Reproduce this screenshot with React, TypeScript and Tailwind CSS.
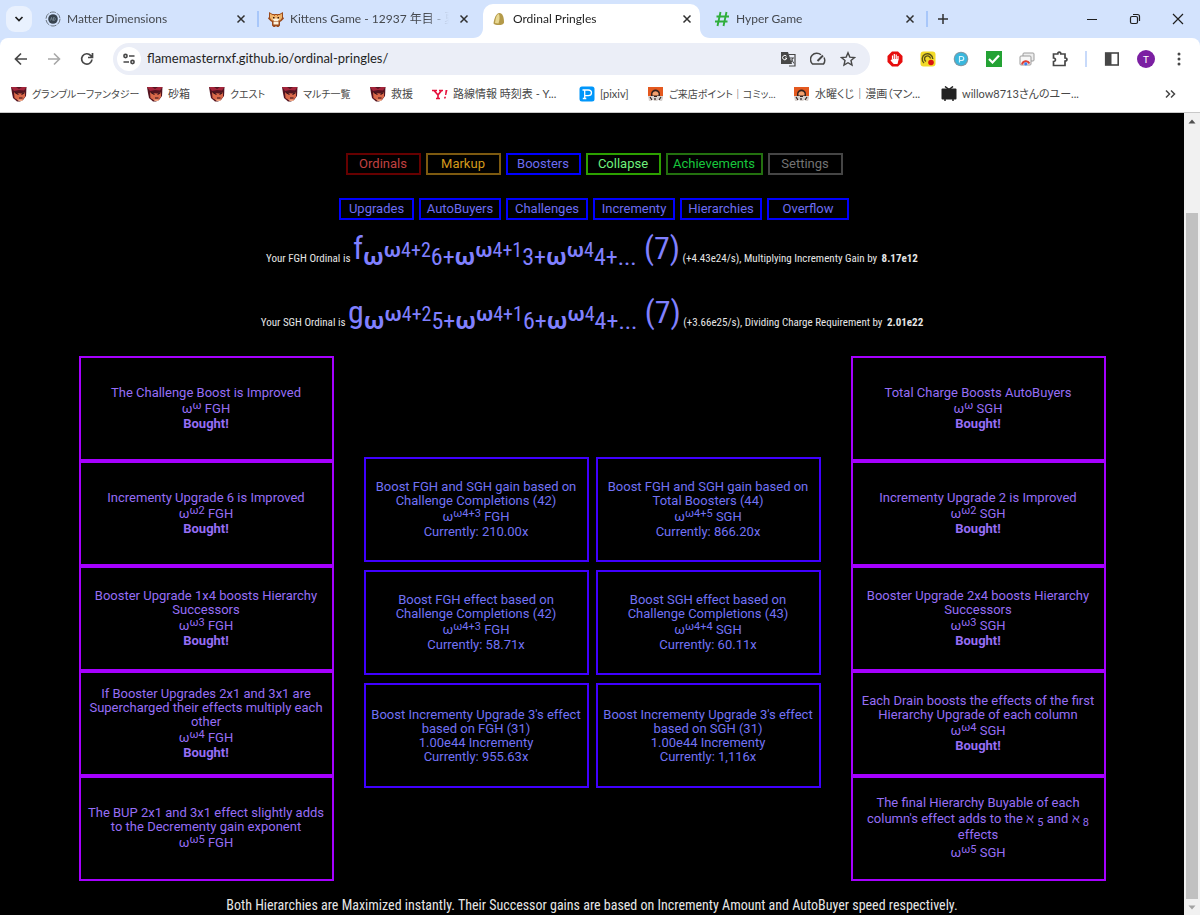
import clsx from "clsx";
import { ReactNode } from "react";

const uiFont = "font-['Lato','Noto_Sans_CJK_JP',sans-serif]";
const gameFont = "font-['Roboto_Condensed','Lato',sans-serif]";

/* ---------- favicons ---------- */

function MatterIcon() {
  return (
    <svg viewBox="0 0 16 16" className="size-4">
      <circle cx="8" cy="8" r="7" fill="none" stroke="#6b7580" strokeWidth="1" strokeDasharray="6 1.4" />
      <circle cx="8" cy="8" r="4.800" fill="#37424d" />
      <path d="M5.500 9.500 6.500 6.500l1 3M8.500 6.500v3c2.400.2 2.400-3.200 0-3" fill="none" stroke="#7f909c" strokeWidth=".8" />
    </svg>
  );
}

function KittenIcon() {
  return (
    <svg viewBox="0 0 16 16" className="size-4">
      <path d="M1 1l3.500 2h7L15 1v5l1 1.500-2.500 2.500-1.500 1v3.500L10.500 16H9l-1-1-1 1H5.500L4 14.500V11l-1.500-1L0 7.500 1 6z" fill="#9a4a1c" />
      <path d="M2 2.500 4.500 4h7L14 2.500V7l-2 2.500H4L2 7z" fill="#efb36a" />
      <path d="M6 3h1v2H6zM9 3h1v2H9z" fill="#b5602a" />
      <path d="M4.500 7.500h7L10 10H6zM5.500 10.500h5v3h-5z" fill="#fdf3dc" />
      <path d="M5 6h1.500v1.500H5zM9.500 6H11v1.500H9.500z" fill="#3a1a0a" />
    </svg>
  );
}

function PringleIcon() {
  return (
    <svg viewBox="0 0 16 16" className="size-4">
      <path d="M2.500 12.500C3 8 5 2 8.500 2c3 0 4.500 4 4.500 9.500 0 3-8.500 3.500-10.500 1z" fill="#b49a49" />
      <path d="M4 12c.5-4 1.500-9 4-9 .8 2 .8 6-.5 9.500z" fill="#e8d892" />
    </svg>
  );
}

function HashIcon() {
  return (
    <svg viewBox="0 0 16 16" className="size-4">
      <path d="M6.500 1 3.500 15M12.500 1l-3 14M2.500 5.500H15M1 10.500h12.500" fill="none" stroke="#2fae3b" strokeWidth="1.900" />
    </svg>
  );
}

function FighterIcon() {
  return (
    <svg viewBox="0 0 16 16" className="size-4">
      <path d="M0 1h15.500l-.5 9-3 4-3 1.500H6L2 12 1 7z" fill="#541420" />
      <path d="M0 1h5l3 2 3-2h4.500L13 4.500 8 4 3 5z" fill="#a3243a" />
      <path d="M3 6.500l3 .5 4 .5 4-1.500v5l-3 3.500H7.500L3.500 12z" fill="#d9694a" />
      <path d="M4 6.500l3.500 2M13.500 6.500l-3 2M8 12h3.500" stroke="#32101a" strokeWidth="1.200" fill="none" />
      <path d="M6 13.500l2 1.500h3l1-1.500z" fill="#f0a583" />
    </svg>
  );
}

function YahooIcon() {
  return (
    <svg viewBox="0 0 16 16" className="size-4">
      <path d="M0 4.500h5M7 4.500h4M2 4.500l4 4.500 3.500-4.500M6 9v3.500M4 12.500h4" fill="none" stroke="#e6123d" strokeWidth="1.700" />
      <path d="M13.500 4h2l-1.200 5h-1.300zM12.300 10.800h1.700l-.4 1.700H12z" fill="#e6123d" />
    </svg>
  );
}

function PixivIcon() {
  return (
    <svg viewBox="0 0 16 16" className="size-4">
      <rect width="15" height="15" x=".5" y=".5" rx="2.500" fill="#0096fa" />
      <path d="M3.500 4h5.700c4.400 0 4.400 5.700 0 5.700H6M5.700 4v9M3.800 12.500h3.500" fill="none" stroke="#fff" strokeWidth="1.300" />
    </svg>
  );
}

function ShopIcon() {
  return (
    <svg viewBox="0 0 16 16" className="size-4">
      <path d="M0 1h15v9H0z" fill="#e4591f" />
      <path d="M3 8c0-6 9-6 9 0v3H3z" fill="#33211d" />
      <path d="M4.500 7.500c1-3 5-3 6 0v2h-6z" fill="#f3a16f" />
      <path d="M0 10h15v2l-1 3h-2l-1-2-2 2H6l-1-2-2 2H1z" fill="#d7d2cf" />
      <path d="M2 11l2 3M6 10.500h3M11 14l2-3M7 14v-2" stroke="#33211d" strokeWidth="1.200" fill="none" />
    </svg>
  );
}

function TvIcon() {
  return (
    <svg viewBox="0 0 16 16" className="size-4">
      <path d="M4 .5 8 3.500 12 .5M4 13v2M12 13v2" stroke="#222" strokeWidth="1.500" fill="none" />
      <rect x=".5" y="2.500" width="15" height="11" rx="1" fill="#222" />
    </svg>
  );
}

/* ---------- browser chrome ---------- */

function CloseIcon() {
  return (
    <svg viewBox="0 0 10 10" className="size-[10px]">
      <path d="M1.500 1.500l7 7M8.500 1.500l-7 7" stroke="currentColor" strokeWidth="1.500" />
    </svg>
  );
}

interface ITab {
  title: string;
  icon: ReactNode;
  active?: boolean;
  divider?: boolean;
}

const tabs: ITab[] = [
  { title: "Matter Dimensions", icon: <MatterIcon />, divider: true },
  { title: "Kittens Game - 12937 年目 - 夏", icon: <KittenIcon /> },
  { title: "Ordinal Pringles", icon: <PringleIcon />, active: true },
  { title: "Hyper Game", icon: <HashIcon />, divider: true },
];

function Tab({ title, icon, active, divider }: ITab) {
  return (
    <div
      className={clsx(
        "relative flex min-w-0 flex-1 items-center pl-2",
        active
          ? "mr-[6px] h-[34px] max-w-[217px] self-end rounded-t-[10px] bg-white pb-1 pr-2 text-[#1f1f1f]"
          : "h-full max-w-[223px] pr-[14px] text-[#45494f]",
      )}
    >
      <span className="shrink-0">{icon}</span>
      <span className="ml-[6px] w-0 flex-1 overflow-hidden whitespace-nowrap text-[12px] [mask-image:linear-gradient(to_right,#000_85%,transparent)]">
        {title}
      </span>
      <button type="button" aria-label={`Close ${title}`} className="ml-[10px] text-[#303030]">
        <CloseIcon />
      </button>
      {divider && <span className="absolute right-px h-4 w-[2px] bg-[#a8c7fa]" />}
      {active && (
        <>
          <svg viewBox="0 0 10 10" className="absolute -left-[10px] bottom-0 size-[10px]">
            <path d="M10 0v10H0C6 10 10 6 10 0z" fill="#fff" />
          </svg>
          <svg viewBox="0 0 10 10" className="absolute -right-[10px] bottom-0 size-[10px]">
            <path d="M0 0v10h10C4 10 0 6 0 0z" fill="#fff" />
          </svg>
        </>
      )}
    </div>
  );
}

function TabStrip() {
  return (
    <div className="flex h-[38px] items-center bg-[#d3e3fd] pl-[6px]">
      <button
        type="button"
        aria-label="Search tabs"
        className="mr-[5px] flex size-[26px] items-center justify-center rounded-[9px] bg-[#e9f1fe]"
      >
        <svg viewBox="0 0 10 10" className="size-[10px]">
          <path d="M1.500 3 5 6.500 8.500 3" fill="none" stroke="#1f1f1f" strokeWidth="1.700" />
        </svg>
      </button>
      <div className="flex h-full min-w-0 flex-1 items-center">
        {tabs.map((tab) => (
          <Tab key={tab.title} {...tab} />
        ))}
        <button type="button" aria-label="New tab" className="ml-2 text-[#303030]">
          <svg viewBox="0 0 12 12" className="size-3">
            <path d="M6 1v10M1 6h10" stroke="currentColor" strokeWidth="1.500" />
          </svg>
        </button>
      </div>
      <div className="flex items-center gap-[31px] pr-4 text-[#1f1f1f]">
        <button type="button" aria-label="Minimize">
          <svg viewBox="0 0 12 12" className="size-3">
            <path d="M1 6.500h10" stroke="currentColor" />
          </svg>
        </button>
        <button type="button" aria-label="Restore">
          <svg viewBox="0 0 12 12" className="size-3" fill="none" stroke="currentColor" strokeWidth="1.200">
            <rect x="1.500" y="3.500" width="7" height="7" rx="1.500" />
            <path d="M4 1.500h4.500c1.200 0 2 .8 2 2V8" />
          </svg>
        </button>
        <button type="button" aria-label="Close window">
          <svg viewBox="0 0 12 12" className="size-3">
            <path d="M1 1l10 10M11 1 1 11" stroke="currentColor" strokeWidth="1.200" />
          </svg>
        </button>
      </div>
    </div>
  );
}

function Toolbar() {
  return (
    <div className="flex h-[42px] items-center rounded-t-lg bg-white pl-[14px] pr-[19px] text-[#474747]">
      <div className="flex items-center gap-[19px]">
        <button type="button" aria-label="Back">
          <svg viewBox="0 0 14 14" className="size-[14px]" fill="none" stroke="currentColor" strokeWidth="1.700">
            <path d="M13 7H2M7 1.500 1.500 7 7 12.500" />
          </svg>
        </button>
        <button type="button" aria-label="Forward" className="text-[#a8a8a8]">
          <svg viewBox="0 0 14 14" className="size-[14px]" fill="none" stroke="currentColor" strokeWidth="1.600">
            <path d="M1 7h11M7 1.500 12.500 7 7 12.500" />
          </svg>
        </button>
        <button type="button" aria-label="Reload">
          <svg viewBox="0 0 14 14" className="size-[14px]" fill="none" stroke="currentColor" strokeWidth="1.700">
            <path d="M12 7.500A5.200 5.200 0 1 1 10.800 3.600L12 5M12.500 1v4.500H8" />
          </svg>
        </button>
      </div>
      <div className="ml-[19px] flex h-8 min-w-0 flex-1 items-center rounded-full bg-[#ebeef7] pl-1 pr-[14px]">
        <button
          type="button"
          aria-label="Site information"
          className="flex size-6 shrink-0 items-center justify-center rounded-full bg-white"
        >
          <svg viewBox="0 0 14 14" className="size-[14px]" fill="none" stroke="currentColor" strokeWidth="1.600">
            <circle cx="3.500" cy="4" r="1.600" />
            <path d="M7 4h5.500M1.500 10H7" />
            <circle cx="10.500" cy="10" r="1.600" />
          </svg>
        </button>
        <input
          aria-label="Address"
          defaultValue="flamemasternxf.github.io/ordinal-pringles/"
          className="ml-[6px] min-w-0 flex-1 bg-transparent text-[13px] text-[#1f1f1f] outline-none"
        />
        <div className="flex items-center gap-[14px]">
          <svg viewBox="0 0 16 16" className="size-4">
            <path d="M1 1h7l4 12H1z" fill="#474747" />
            <path d="M8.500 3.500H15V15H9" fill="none" stroke="#474747" strokeWidth="1.200" />
            <path d="M6.500 5.200A2.200 2.200 0 1 0 6.500 8V7H5" fill="none" stroke="#fff" />
            <path d="M10 7h4M12.500 7c0 2-1 4-2 5M11.500 8.500l2.500 4" fill="none" stroke="#474747" />
          </svg>
          <svg viewBox="0 0 16 16" className="size-4" fill="none" stroke="#474747" strokeWidth="1.500">
            <path d="M11 3.800A6.200 6.200 0 0 0 2.500 13h11A6.200 6.200 0 0 0 14 6.500" />
            <path d="M7.500 10 13 4.500" strokeWidth="2" />
          </svg>
          <svg viewBox="0 0 16 16" className="size-4" fill="none" stroke="#474747" strokeWidth="1.400">
            <path d="M8 1.800l1.800 4.300 4.700.4-3.500 3 1 4.600L8 11.700l-4 2.400 1-4.600-3.500-3 4.700-.4z" />
          </svg>
        </div>
      </div>
      <div className="ml-[17px] flex items-center gap-[17px]">
        <svg viewBox="0 0 16 16" className="size-4">
          <path d="M5 .5h6L15.500 5v6L11 15.500H5L.5 11V5z" fill="#e60d0d" />
          <path d="M5.500 8.500V4.500M7.300 8V3M9.200 8V3.500M11 8.500V5M5.500 8.500H11L10 12.500H7L4 9" stroke="#fff" strokeWidth="1.200" fill="#fff" />
        </svg>
        <svg viewBox="0 0 16 16" className="size-4">
          <rect x=".5" y=".5" width="15" height="15" rx="3" fill="#f2da28" />
          <path d="M4 12a5.300 5.300 0 1 1 8.800-4M6 10.500A3 3 0 1 1 10.500 7.500" fill="none" stroke="#5c5218" strokeWidth="1.400" />
          <circle cx="11" cy="11.500" r="2.800" fill="#d8150f" />
        </svg>
        <svg viewBox="0 0 16 16" className="size-4">
          <circle cx="8" cy="8" r="7.300" fill="#7f99a5" />
          <circle cx="8" cy="8" r="6.200" fill="#39b7dd" />
          <path d="M6.500 11.500V5.500h2c3 0 3 4 0 4h-2" fill="none" stroke="#d8f4fc" strokeWidth="1.200" />
        </svg>
        <svg viewBox="0 0 16 16" className="size-4">
          <rect width="16" height="16" fill="#23a234" />
          <path d="M3 8l3.500 3.500L13 4.500" fill="none" stroke="#fff" strokeWidth="2.200" />
        </svg>
        <svg viewBox="0 0 16 16" className="size-4">
          <rect x="4" y="2" width="11" height="8" rx="1" fill="#eee" stroke="#9b9b9b" />
          <rect x="1" y="5" width="11" height="9" rx="1" fill="#f7f7f7" stroke="#9b9b9b" />
          <path d="M3 13.500a4 4 0 0 1 7.500-1" fill="none" stroke="#df4034" strokeWidth="2" />
          <circle cx="6.800" cy="12.800" r="1.600" fill="#3f7ff0" />
        </svg>
        <svg viewBox="0 0 16 16" className="size-4" fill="none" stroke="#474747" strokeWidth="1.700">
          <path d="M1.500 3h4.300c0-2.400 3-2.400 3 0H13v4c2.600 0 2.600 3 0 3v4.500H1.500v-4c2.600 0 2.600-3.500 0-3.500z" />
        </svg>
        <span className="h-4 w-[2px] bg-[#c8dafa]" />
        <svg viewBox="0 0 16 16" className="size-4">
          <rect x="1.700" y="2" width="12.500" height="12" fill="none" stroke="#474747" strokeWidth="1.600" />
          <path d="M1.500 2h6v12h-6z" fill="#474747" />
        </svg>
        <button
          type="button"
          className="flex size-[18px] items-center justify-center rounded-full bg-[#7b1fa2] text-[10px] text-white"
        >
          T
        </button>
        <button type="button" aria-label="Menu" className="ml-[5px]">
          <svg viewBox="0 0 4 16" className="h-4 w-1" fill="#474747">
            <circle cx="2" cy="3" r="1.500" />
            <circle cx="2" cy="8" r="1.500" />
            <circle cx="2" cy="13" r="1.500" />
          </svg>
        </button>
      </div>
    </div>
  );
}

const bookmarks = [
  { label: "グランブルーファンタジー", icon: <FighterIcon />, style: "w-[136px] text-[10px]" },
  { label: "砂箱", icon: <FighterIcon />, style: "w-[62px] text-[11px]" },
  { label: "クエスト", icon: <FighterIcon />, style: "w-[73px] text-[10px]" },
  { label: "マルチ一覧", icon: <FighterIcon />, style: "w-[88px] text-[10px]" },
  { label: "救援", icon: <FighterIcon />, style: "w-[62px] text-[11px]" },
  { label: "路線情報 時刻表 - Y...", icon: <YahooIcon />, style: "w-[147px] text-[11px]" },
  { label: "[pixiv]", icon: <PixivIcon />, style: "w-[69px] text-[11px]" },
  { label: "ご来店ポイント｜コミッ...", icon: <ShopIcon />, style: "w-[146px] text-[10px]" },
  { label: "水曜くじ｜漫画（マン...", icon: <ShopIcon />, style: "w-[147px] text-[11px]" },
  { label: "willow8713さんのユー...", icon: <TvIcon />, style: "w-[140px] text-[11px]" },
];

function BookmarkBar() {
  return (
    <div className="flex h-[33px] items-center border-b border-[#c9c9c9] bg-white pb-1 pl-[11px] pr-6 text-[#474747]">
      <div className="flex min-w-0 flex-1 overflow-hidden">
        {bookmarks.map(({ label, icon, style }) => (
          <a
            key={label}
            href="#bookmark"
            className={clsx(
              "flex shrink-0 items-center gap-[5px] whitespace-nowrap [font-feature-settings:'palt']",
              style,
            )}
          >
            <span className="shrink-0">{icon}</span>
            {label}
          </a>
        ))}
      </div>
      <button type="button" aria-label="More bookmarks">
        <svg viewBox="0 0 12 12" className="size-3" fill="none" stroke="currentColor" strokeWidth="1.500">
          <path d="M2 2.500 5.500 6 2 9.500M7 2.500 10.500 6 7 9.500" />
        </svg>
      </button>
    </div>
  );
}

/* ---------- game ---------- */

const mainNav = [
  { label: "Ordinals", style: "min-w-[75px] border-[#660000] text-[#c04040]" },
  { label: "Markup", style: "min-w-[75px] border-[#7d5a10] text-[#d39a1c]" },
  { label: "Boosters", style: "min-w-[75px] border-[#0000ff] text-[#6d6df2]" },
  { label: "Collapse", style: "min-w-[75px] border-[#2da000] text-[#6ff07c]" },
  { label: "Achievements", style: "min-w-[97px] border-[#23700f] text-[#18c63c]" },
  { label: "Settings", style: "min-w-[75px] border-[#454545] text-[#737373]" },
];

const subNav = [
  { label: "Upgrades", style: "min-w-[75px]" },
  { label: "AutoBuyers", style: "min-w-[82px]" },
  { label: "Challenges", style: "min-w-[82px]" },
  { label: "Incrementy", style: "min-w-[82px]" },
  { label: "Hierarchies", style: "min-w-[82px]" },
  { label: "Overflow", style: "min-w-[82px]" },
];

function NavRow({ items, className }: { items: { label: string; style: string }[]; className?: string }) {
  return (
    <nav className="flex justify-center gap-[5px] pl-1">
      {items.map(({ label, style }) => (
        <button
          key={label}
          type="button"
          className={clsx("h-[22px] border-2 text-[13px] leading-[18px]", style, className)}
        >
          {label}
        </button>
      ))}
    </nav>
  );
}

interface IOrdinal {
  name: string;
  letter: string;
  coefficients: [number, number, number];
  rate: string;
  effect: string;
  value: string;
}

function Omega() {
  return <span className="font-['Open_Sans',sans-serif] font-bold">ω</span>;
}

function Power({ children }: { children: ReactNode }) {
  return (
    <>
      <Omega />
      <sup className="-top-2 text-[20px]">
        <Omega />
        {children}
      </sup>
    </>
  );
}

function OrdinalLine({ name, letter, coefficients, rate, effect, value }: IOrdinal) {
  const [a, b, c] = coefficients;
  return (
    <p className={`h-16 whitespace-nowrap text-center text-[11px] leading-[64px] text-[#e6e6e6] ${gameFont}`}>
      Your {name} Ordinal is{" "}
      <span className="align-[3px] text-[32px] leading-none text-[#8080ff]">
        {letter}
        <sub className="-bottom-[6px] text-[24px]">
          <Power>4+2</Power>
          {a}+<Power>4+1</Power>
          {b}+<Power>4</Power>
          {c}+...
        </sub>{" "}
        (7)
      </span>{" "}
      (+{rate}/s), {effect} by <b className="ml-[2px]">{value}</b>
    </p>
  );
}

interface IUpgrade {
  lines: ReactNode[];
  exponent?: string;
  unit?: string;
  cost?: string;
  footer?: string;
  loose?: boolean;
}

const fghUpgrades: IUpgrade[] = [
  { lines: ["The Challenge Boost is Improved"], exponent: "ω", unit: "FGH", footer: "Bought!" },
  { lines: ["Incrementy Upgrade 6 is Improved"], exponent: "ω2", unit: "FGH", footer: "Bought!" },
  { lines: ["Booster Upgrade 1x4 boosts Hierarchy", "Successors"], exponent: "ω3", unit: "FGH", footer: "Bought!" },
  {
    lines: ["If Booster Upgrades 2x1 and 3x1 are", "Supercharged their effects multiply each", "other"],
    exponent: "ω4",
    unit: "FGH",
    footer: "Bought!",
  },
  { lines: ["The BUP 2x1 and 3x1 effect slightly adds", "to the Decrementy gain exponent"], exponent: "ω5", unit: "FGH" },
];

const sghUpgrades: IUpgrade[] = [
  { lines: ["Total Charge Boosts AutoBuyers"], exponent: "ω", unit: "SGH", footer: "Bought!" },
  { lines: ["Incrementy Upgrade 2 is Improved"], exponent: "ω2", unit: "SGH", footer: "Bought!" },
  { lines: ["Booster Upgrade 2x4 boosts Hierarchy", "Successors"], exponent: "ω3", unit: "SGH", footer: "Bought!" },
  {
    lines: ["Each Drain boosts the effects of the first", "Hierarchy Upgrade of each column"],
    exponent: "ω4",
    unit: "SGH",
    footer: "Bought!",
  },
  {
    lines: [
      "The final Hierarchy Buyable of each",
      <>
        column's effect adds to the ℵ <sub className="text-[11px]">5</sub> and ℵ <sub className="text-[11px]">8</sub>
      </>,
      "effects",
    ],
    exponent: "ω5",
    unit: "SGH",
    loose: true,
  },
];

const buyables: IUpgrade[] = [
  {
    lines: ["Boost FGH and SGH gain based on", "Challenge Completions (42)"],
    exponent: "ω4+3",
    unit: "FGH",
    footer: "Currently: 210.00x",
  },
  {
    lines: ["Boost FGH and SGH gain based on", "Total Boosters (44)"],
    exponent: "ω4+5",
    unit: "SGH",
    footer: "Currently: 866.20x",
  },
  {
    lines: ["Boost FGH effect based on", "Challenge Completions (42)"],
    exponent: "ω4+3",
    unit: "FGH",
    footer: "Currently: 58.71x",
  },
  {
    lines: ["Boost SGH effect based on", "Challenge Completions (43)"],
    exponent: "ω4+4",
    unit: "SGH",
    footer: "Currently: 60.11x",
  },
  {
    lines: ["Boost Incrementy Upgrade 3's effect", "based on FGH (31)"],
    cost: "1.00e44 Incrementy",
    footer: "Currently: 955.63x",
  },
  {
    lines: ["Boost Incrementy Upgrade 3's effect", "based on SGH (31)"],
    cost: "1.00e44 Incrementy",
    footer: "Currently: 1,116x",
  },
];

function Upgrade({ upgrade, className }: { upgrade: IUpgrade; className: string }) {
  const { lines, exponent, unit, cost, footer, loose } = upgrade;
  return (
    <button
      type="button"
      className={clsx(
        "flex h-[105px] flex-col items-center justify-center whitespace-nowrap border-2 text-[13px]",
        loose ? "leading-4" : "leading-[14px]",
        className,
      )}
    >
      {lines.map((line, i) => (
        <span key={i}>{line}</span>
      ))}
      {exponent && (
        <span className="pb-px pt-[2px]">
          ω<sup className="-top-1 text-[11px]">{exponent}</sup> {unit}
        </span>
      )}
      {cost && <span>{cost}</span>}
      {footer && <span className={clsx(footer === "Bought!" && "font-bold")}>{footer}</span>}
    </button>
  );
}

function UpgradeColumn({ upgrades }: { upgrades: IUpgrade[] }) {
  return (
    <div className="flex w-[255px] flex-col">
      {upgrades.map((upgrade, i) => (
        <Upgrade key={i} upgrade={upgrade} className="border-[#a600ff] text-[#966ef5]" />
      ))}
    </div>
  );
}

function Game() {
  return (
    <main className="min-w-0 flex-1 overflow-hidden bg-black pt-10 font-['Roboto','Liberation_Sans',sans-serif]">
      <NavRow items={mainNav} />
      <div className="h-[23px]" />
      <NavRow items={subNav} className="border-[#0000ff] text-[#6d6df2]" />
      <div className="pb-px pt-[7px]">
        <OrdinalLine
          name="FGH"
          letter="f"
          coefficients={[6, 3, 4]}
          rate="4.43e24"
          effect="Multiplying Incrementy Gain"
          value="8.17e12"
        />
        <OrdinalLine
          name="SGH"
          letter="g"
          coefficients={[5, 6, 4]}
          rate="3.66e25"
          effect="Dividing Charge Requirement"
          value="2.01e22"
        />
      </div>
      <div className="flex justify-center gap-[30px]">
        <UpgradeColumn upgrades={fghUpgrades} />
        <div className="grid grid-cols-[225px_225px] gap-x-[7px] gap-y-2 self-center pt-2">
          {buyables.map((upgrade, i) => (
            <Upgrade key={i} upgrade={upgrade} className="border-[#4000ff] text-[#7272f5]" />
          ))}
        </div>
        <UpgradeColumn upgrades={sghUpgrades} />
      </div>
      <p className={`mt-[14px] text-center text-[14px] leading-5 text-[#e6e6e6] ${gameFont}`}>
        Both Hierarchies are Maximized instantly. Their Successor gains are based on Incrementy Amount and AutoBuyer
        speed respectively.
      </p>
    </main>
  );
}

function Scrollbar() {
  return (
    <div className="flex w-4 shrink-0 flex-col items-center bg-[#f1f1f1]">
      <svg viewBox="0 0 16 16" className="size-4">
        <path d="M4.500 10.500 8 6.500l3.500 4z" fill="#505050" />
      </svg>
      <div className="h-[84px]" />
      <div className="w-3 flex-1 bg-[#c1c1c1]" />
      <svg viewBox="0 0 16 16" className="size-4">
        <path d="M4.500 6.500 8 10.500l3.500-4z" fill="#a3a3a3" />
      </svg>
    </div>
  );
}

function App() {
  return (
    <div className="flex h-screen flex-col overflow-hidden bg-black">
      <header className={`shrink-0 bg-[#d3e3fd] ${uiFont}`}>
        <TabStrip />
        <Toolbar />
        <BookmarkBar />
      </header>
      <div className="flex min-h-0 flex-1">
        <Game />
        <Scrollbar />
      </div>
    </div>
  );
}

export default App;
